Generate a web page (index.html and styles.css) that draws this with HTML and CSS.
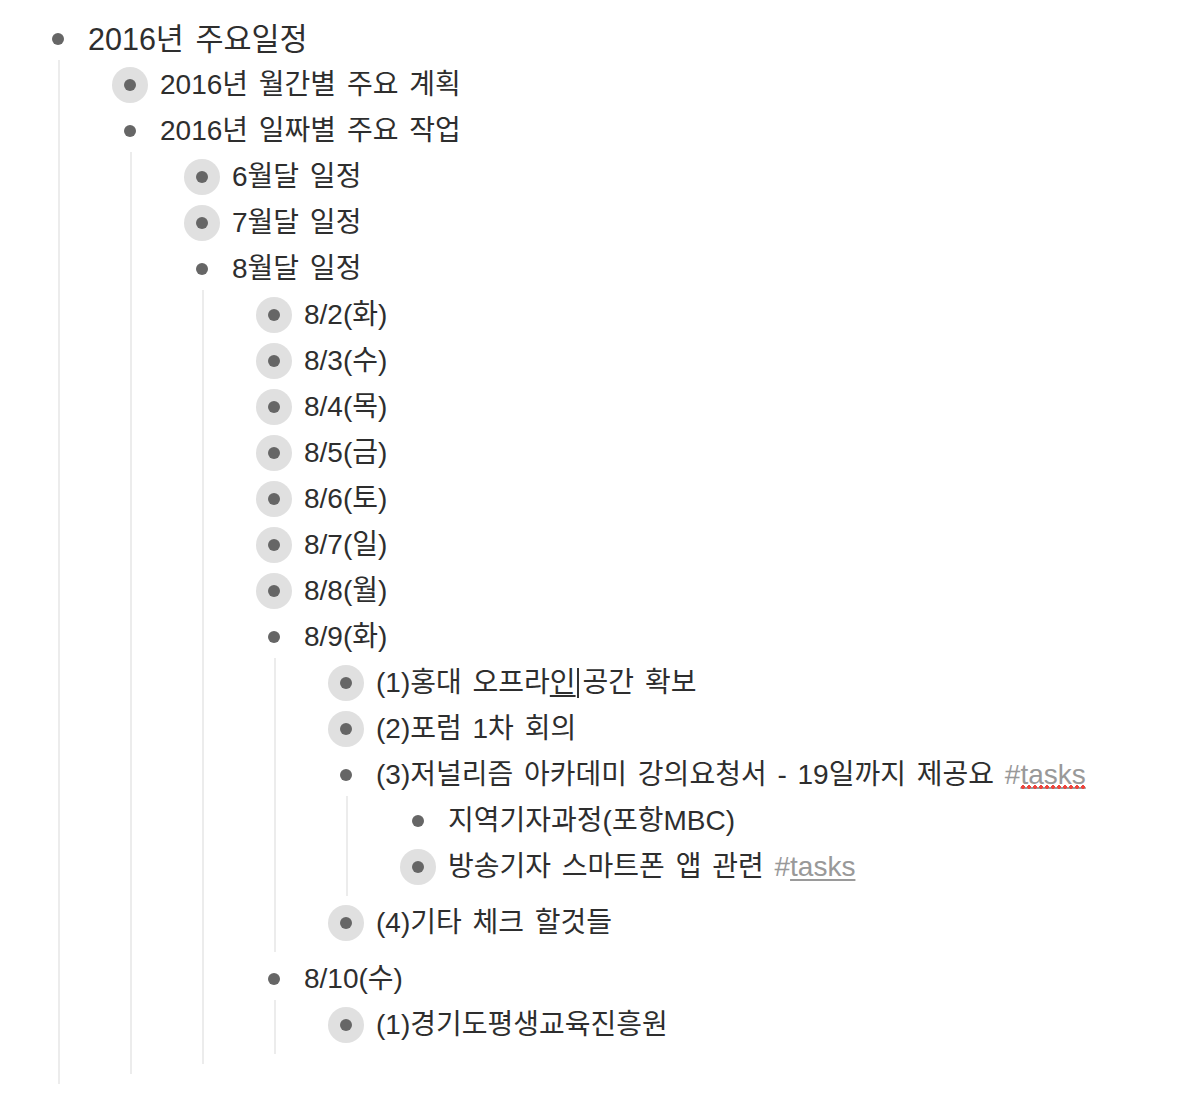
FILE: index.html
```html
<!DOCTYPE html>
<html lang="ko">
<head>
<meta charset="utf-8">
<title>Outline</title>
<link rel="stylesheet" href="styles.css">
</head>
<body>
<div class="outline">
  <div class="node">
    <div class="row top"><span class="bullet"></span><span class="text">2016년 주요일정</span></div>
    <div class="children">
      <div class="node">
        <div class="row"><span class="bullet collapsed"></span><span class="text">2016년 월간별 주요 계획</span></div>
      </div>
      <div class="node">
        <div class="row"><span class="bullet"></span><span class="text">2016년 일짜별 주요 작업</span></div>
        <div class="children">
          <div class="node"><div class="row"><span class="bullet collapsed"></span><span class="text">6월달 일정</span></div></div>
          <div class="node"><div class="row"><span class="bullet collapsed"></span><span class="text">7월달 일정</span></div></div>
          <div class="node">
            <div class="row"><span class="bullet"></span><span class="text">8월달 일정</span></div>
            <div class="children">
              <div class="node"><div class="row"><span class="bullet collapsed"></span><span class="text">8/2(화)</span></div></div>
              <div class="node"><div class="row"><span class="bullet collapsed"></span><span class="text">8/3(수)</span></div></div>
              <div class="node"><div class="row"><span class="bullet collapsed"></span><span class="text">8/4(목)</span></div></div>
              <div class="node"><div class="row"><span class="bullet collapsed"></span><span class="text">8/5(금)</span></div></div>
              <div class="node"><div class="row"><span class="bullet collapsed"></span><span class="text">8/6(토)</span></div></div>
              <div class="node"><div class="row"><span class="bullet collapsed"></span><span class="text">8/7(일)</span></div></div>
              <div class="node"><div class="row"><span class="bullet collapsed"></span><span class="text">8/8(월)</span></div></div>
              <div class="node">
                <div class="row"><span class="bullet"></span><span class="text">8/9(화)</span></div>
                <div class="children">
                  <div class="node"><div class="row"><span class="bullet collapsed"></span><span class="text">(1)홍대 오프라<span class="ime">인</span><span class="caret"></span>공간 확보</span></div></div>
                  <div class="node"><div class="row"><span class="bullet collapsed"></span><span class="text">(2)포럼 1차 회의</span></div></div>
                  <div class="node">
                    <div class="row"><span class="bullet"></span><span class="text">(3)저널리즘 아카데미 강의요청서 - 19일까지 제공요 <span class="tag">#<span class="tagname spell">tasks</span></span></span></div>
                    <div class="children">
                      <div class="node"><div class="row"><span class="bullet"></span><span class="text">지역기자과정(포항MBC)</span></div></div>
                      <div class="node"><div class="row"><span class="bullet collapsed"></span><span class="text">방송기자 스마트폰 앱 관련 <span class="tag">#<span class="tagname">tasks</span></span></span></div></div>
                    </div>
                  </div>
                  <div class="node"><div class="row"><span class="bullet collapsed"></span><span class="text">(4)기타 체크 할것들</span></div></div>
                </div>
              </div>
              <div class="node">
                <div class="row"><span class="bullet"></span><span class="text">8/10(수)</span></div>
                <div class="children">
                  <div class="node"><div class="row"><span class="bullet collapsed"></span><span class="text">(1)경기도평생교육진흥원</span></div></div>
                </div>
              </div>
            </div>
          </div>
        </div>
      </div>
    </div>
  </div>
</div>
</body>
</html>
```

FILE: styles.css
```css
html, body {
  margin: 0;
  padding: 0;
  background: #ffffff;
}

body {
  font-family: "Liberation Sans", "Noto Sans CJK KR", sans-serif;
  color: #2e2e2e;
  font-size: 28px;
  word-spacing: 3px;
}

.outline {
  padding: 18px 0 0 40px;
}

.node + .node {
  margin-top: 4px;
}

.node.parent + .node,
.node:has(> .children) + .node {
  margin-top: 6px;
}

.row {
  display: flex;
  align-items: center;
  height: 42px;
}

.bullet {
  flex: 0 0 36px;
  width: 36px;
  height: 36px;
  border-radius: 50%;
  display: flex;
  align-items: center;
  justify-content: center;
}

.bullet::after {
  content: "";
  width: 12px;
  height: 12px;
  border-radius: 50%;
  background: #666666;
}

.bullet.collapsed {
  background: #e0e0e0;
}

.text {
  margin-left: 12px;
  white-space: nowrap;
  line-height: 42px;
}

.top .text {
  font-size: 30.5px;
}

.children {
  margin: 0 0 2px 18px;
  padding: 4px 0 8px 52px;
  border-left: 2px solid #ececec;
}

.ime {
  text-decoration: underline;
  text-decoration-thickness: 2px;
  text-underline-offset: 3px;
}

.caret {
  display: inline-block;
  width: 2px;
  height: 30px;
  background: #333333;
  vertical-align: -6px;
  margin: 0 4px 0 1px;
}

.tag {
  color: #999999;
}

.tagname {
  text-decoration: underline;
  text-decoration-color: #9a9a9a;
  text-decoration-thickness: 2px;
  text-underline-offset: 3px;
}

.spell {
  position: relative;
}

.spell::after {
  content: "";
  position: absolute;
  left: 0;
  right: 0;
  bottom: 1px;
  height: 4px;
  background-image: radial-gradient(circle, #f0443c 1.7px, transparent 2px);
  background-size: 6px 4px;
  background-repeat: repeat-x;
}
```
